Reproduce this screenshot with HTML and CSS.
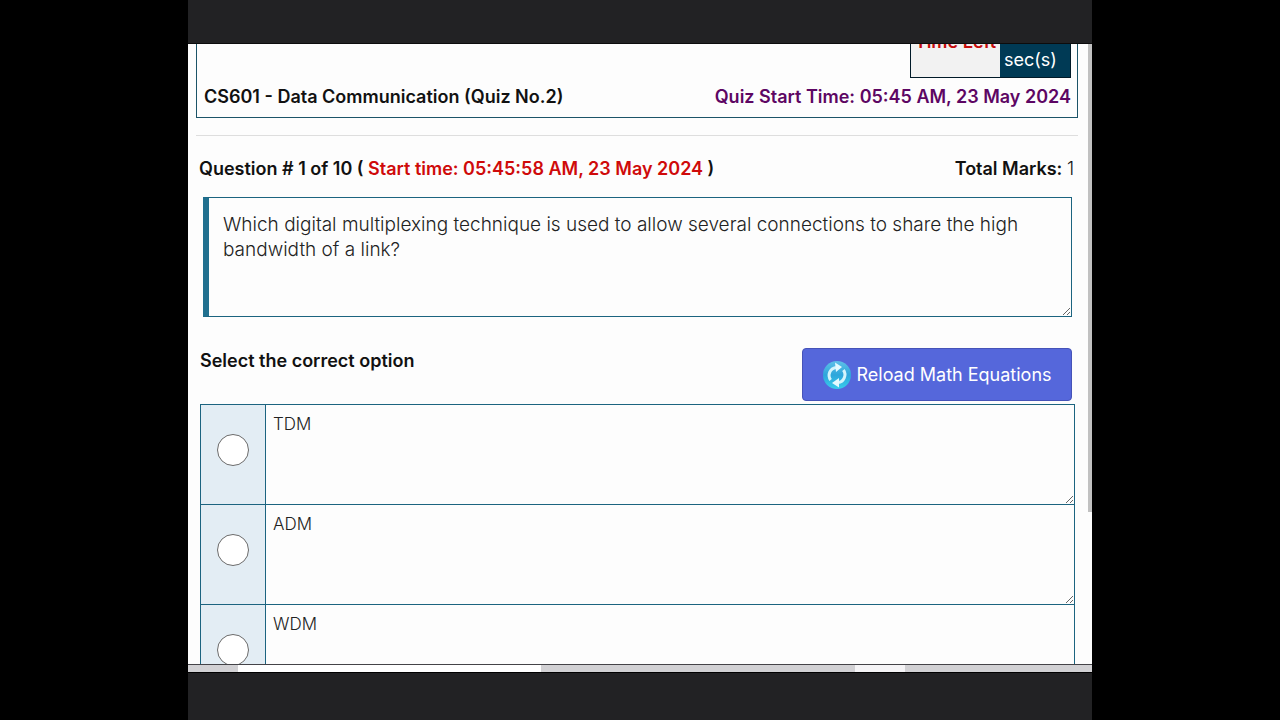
FILE: index.html
```html
<!DOCTYPE html>
<html lang="en">
<head>
     <meta charset="UTF-8">
     <meta name="viewport" content="width=device-width, initial-scale=1.0">
     <title>CS601 - Data Communication (Quiz No.2)</title>
     <link rel="stylesheet" href="styles.css">
</head>
<body>
     <div class="viewer">
          <div class="band band-top"></div>
          <div class="window">
               <main class="page">
                    <header class="quiz-head">
                         <div class="timer">
                              <div class="timer-label">Time Left</div>
                              <div class="timer-value">sec(s)</div>
                         </div>
                         <div class="quiz-info">
                              <span>CS601 - Data Communication (Quiz No.2)</span>
                              <span class="quiz-start">Quiz Start Time: 05:45 AM, 23 May 2024</span>
                         </div>
                    </header>
                    <hr class="divider">
                    <div class="question-head">
                         <span>Question # 1 of 10 ( <span class="red">Start time: 05:45:58 AM, 23 May 2024</span> )</span>
                         <span>Total Marks: <span class="light">1</span></span>
                    </div>
                    <textarea class="question" aria-label="Question" readonly>Which digital multiplexing technique is used to allow several connections to share the high bandwidth of a link?</textarea>
                    <div class="option-head">
                         <span>Select the correct option</span>
                         <button type="button" class="reload">
                              <svg width="30" height="30" viewBox="0 0 30 30" aria-hidden="true">
                                   <defs>
                                        <linearGradient id="ball" x1="0" y1="0" x2="0" y2="1">
                                             <stop offset="0" stop-color="#5fc0e8"/>
                                             <stop offset="0.5" stop-color="#2da6db"/>
                                             <stop offset="1" stop-color="#39cdec"/>
                                        </linearGradient>
                                   </defs>
                                   <circle cx="15" cy="15" r="14" fill="url(#ball)"/>
                                   <g fill="none" stroke="#d3f4fc" stroke-width="3">
                                        <path d="M8.6 20A8 8 0 0 1 14 7.4"/>
                                        <path d="M21.4 10A8 8 0 0 1 16 22.6"/>
                                   </g>
                                   <path d="M13 2.5L20 7L14 12Z" fill="#e4faff"/>
                                   <path d="M17 18L10 23L17 27.5Z" fill="#e4faff"/>
                              </svg>
                              <span>Reload Math Equations</span>
                         </button>
                    </div>
                    <table class="options">
                         <tr>
                              <td class="pick"><input type="radio" name="answer" aria-labelledby="opt1"></td>
                              <td><textarea id="opt1" class="option-text" aria-label="TDM" readonly>TDM</textarea></td>
                         </tr>
                         <tr>
                              <td class="pick"><input type="radio" name="answer" aria-labelledby="opt2"></td>
                              <td><textarea id="opt2" class="option-text" aria-label="ADM" readonly>ADM</textarea></td>
                         </tr>
                         <tr>
                              <td class="pick"><input type="radio" name="answer" aria-labelledby="opt3"></td>
                              <td><textarea id="opt3" class="option-text" aria-label="WDM" readonly>WDM</textarea></td>
                         </tr>
                    </table>
               </main>
               <div class="scrollbar"></div>
          </div>
          <div class="strip">
               <i class="grey"></i><i class="white"></i><i class="grey wide"></i><i class="white short"></i><i class="grey rest"></i>
          </div>
          <div class="band band-bottom"></div>
     </div>
</body>
</html>
```

FILE: styles.css
```css
*{
     padding: 0;
     margin: 0;
     box-sizing: border-box;
}
body{
     background: #000;
     color: #111;
     font-family: Inter, "Open Sans", sans-serif;
     font-size: 18px;
     line-height: 25px;
}
.viewer{
     height: 100vh;
     margin: 0 188px;
     display: flex;
     flex-direction: column;
}
.band{
     background: #222224;
     flex: none;
}
.band-top{
     height: 44px;
     border-bottom: 1px solid #0c0c0d;
}
.band-bottom{
     height: 48px;
     border-top: 1px solid #000;
}

/* visible part of the scrolled quiz page */
.window{
     flex: 1;
     min-height: 0;
     overflow: hidden;
     display: flex;
     background: #fdfdfd;
     border-bottom: 1px solid #444348;
}
.page{
     flex: 1;
     min-width: 0;
     margin-top: -40px;
     padding-left: 8px;
     padding-right: 10px;
     font-weight: 600;
}
.scrollbar{
     width: 4px;
     height: 468px;
     background: #c1c1c1;
}

.quiz-head{
     border: 1px solid #1c5468;
     padding: 13px 6px 8px 7px;
}
.timer{
     width: 161px;
     height: 60px;
     margin-left: auto;
     display: flex;
     border: 1px solid #001a28;
}
.timer-label{
     width: 89px;
     padding-top: 10px;
     text-align: center;
     white-space: nowrap;
     background: #f2f2f2;
     color: #c60c0c;
}
.timer-value{
     flex: 1;
     padding: 0 4px 5px;
     display: flex;
     align-items: flex-end;
     background: #003a55;
     color: #fff;
     font-weight: 400;
}
.quiz-info,.question-head,.option-head{
     display: flex;
     justify-content: space-between;
}
.quiz-info{
     padding-top: 6px;
}
.quiz-start{color: #5d0663;}
.divider{
     margin-top: 17px;
     border: none;
     border-top: 1px solid #dedede;
}
.question-head{
     padding: 20px 4px 0 3px;
}
.red{color: #cf0a0a;}
.light{font-weight: 300;}

textarea{
     display: block;
     width: 100%;
     font: inherit;
     font-weight: 300;
     color: #222;
     background: transparent;
     outline: none;
     resize: vertical;
     overflow: hidden;
}
.question{
     width: calc(100% - 13px);
     height: 120px;
     margin: 16px 6px 0 7px;
     padding: 14px;
     border: 1px solid #1c6480;
     border-left: 6px solid #21708f;
     font-size: 19px;
}
.option-head{
     padding: 31px 6px 3px 4px;
}
.reload{
     width: 270px;
     height: 53px;
     display: flex;
     align-items: center;
     justify-content: center;
     gap: 4px;
     border: 1px solid #4653b8;
     border-radius: 4px;
     background: #5567db;
     color: #fff;
     font: inherit;
     font-weight: 400;
     white-space: nowrap;
}

.options{
     width: calc(100% - 7px);
     margin-left: 4px;
     border-collapse: collapse;
}
.options td{
     height: 100px;
     border: 1px solid #1c6480;
     vertical-align: top;
}
.options .pick{
     width: 65px;
     padding-top: 29px;
     background: #e3edf4;
     text-align: center;
}
.pick input{
     appearance: none;
     width: 32px;
     height: 32px;
     border: 1px solid #6b6b6b;
     border-radius: 50%;
     background: #fff;
}
.pick input:checked{
     box-shadow: inset 0 0 0 7px #fff;
     background: #21708f;
}
.option-text{
     height: 99px;
     border: none;
     padding: 7px;
     font-size: 17px;
}

/* page strip under the quiz */
.strip{
     height: 7px;
     flex: none;
     display: flex;
}
.strip i{height: 100%;}
.strip .grey{
     width: 50px;
     background: #d2d1d4;
}
.strip .white{
     width: 303px;
     background: #fff;
}
.strip .wide{width: 314px;}
.strip .short{
     width: 50px;
     background: #f5f4f6;
}
.strip .rest{flex: 1;}
```
